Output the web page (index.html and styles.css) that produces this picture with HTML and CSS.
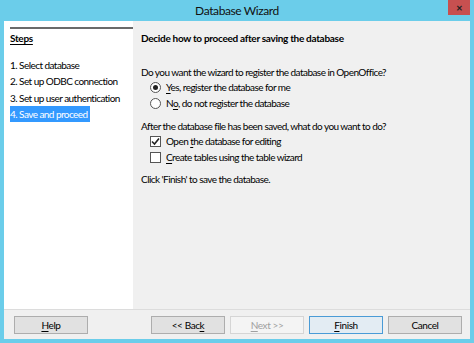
FILE: index.html
```html
<!DOCTYPE html>
<html>
<head lang="en">
    <meta charset="UTF-8">
    <title>Database Wizard</title>
    <link rel="stylesheet" href="styles.css">
</head>
<body>
<div class="window">
    <div class="titlebar">
        <span class="title">Database Wizard</span>
        <span class="close">&#x2715;</span>
    </div>
    <div class="client">
        <div class="main">
            <div class="steps">
                <div class="steps-head"><u>Steps</u></div>
                <ul class="step-list">
                    <li>1. Select database</li>
                    <li>2. Set up ODBC connection</li>
                    <li>3. Set up user authentication</li>
                    <li><span class="current">4. Save and proceed</span></li>
                </ul>
            </div>
            <div class="page">
                <div class="page-head">Decide how to proceed after saving the database</div>
                <p class="question">Do you want the wizard to register the database in OpenOffice?</p>
                <div class="option"><span class="radio checked"></span><span><u>Y</u>es, register the database for me</span></div>
                <div class="option"><span class="radio"></span><span>N<u>o</u>, do not register the database</span></div>
                <p class="question q2">After the database file has been saved, what do you want to do?</p>
                <div class="option"><span class="check checked"><svg width="9" height="9" viewBox="0 0 9 9"><path d="M1 4.5 L3.5 7 L8 1.5" fill="none" stroke="#222" stroke-width="1.6"/></svg></span><span>Open <u>t</u>he database for editing</span></div>
                <div class="option"><span class="check"></span><span><u>C</u>reate tables using the table wizard</span></div>
                <p class="question q3">Click 'Finish' to save the database.</p>
            </div>
        </div>
        <div class="footer">
            <button class="btn"><u>H</u>elp</button>
            <div class="spacer"></div>
            <button class="btn">&lt;&lt; Bac<u>k</u></button>
            <button class="btn disabled"><u>N</u>ext &gt;&gt;</button>
            <button class="btn default"><u>F</u>inish</button>
            <button class="btn">Cancel</button>
        </div>
    </div>
</div>
</body>
</html>
```

FILE: styles.css
```css
* { margin: 0; padding: 0; box-sizing: border-box;}
ul { list-style: none;}
u { text-decoration-thickness: 1px; text-underline-offset: 2px;}
body {
    width: 474px;
    height: 343px;
    overflow: hidden;
    font-family: "Lato", "Noto Sans", sans-serif;
    font-size: 10px;
    letter-spacing: -0.55px;
    color: #000;
    white-space: nowrap;
}
.window {
    width: 474px;
    height: 343px;
    background-color: #6bcdea;
    padding: 0 4px 4px 4px;
    display: flex;
    flex-direction: column;
}
.titlebar {
    height: 21px;
    display: flex;
    align-items: center;
    justify-content: center;
    position: relative;
}
.title {
    font-size: 12px;
    letter-spacing: -0.4px;
    color: #111;
}
.close {
    position: absolute;
    right: 0;
    top: 0;
    width: 22px;
    height: 15px;
    background-color: #c75050;
    color: #222;
    font-size: 8px;
    font-weight: bold;
    letter-spacing: 0;
    display: flex;
    align-items: center;
    justify-content: center;
}
.client {
    flex: 1;
    background-color: #f0f0f0;
    display: flex;
    flex-direction: column;
}
.main {
    height: 288px;
    display: flex;
}
.steps {
    width: 129px;
    background-color: #fff;
    padding: 6px 0 0 6px;
}
.steps-head {
    border-top: 2px solid #6a6a6a;
    font-weight: bold;
    letter-spacing: -0.3px;
    padding-top: 1px;
    height: 30px;
    line-height: 16px;
}
.step-list li {
    height: 16.4px;
    line-height: 16px;
}
.current {
    display: inline-block;
    background-color: #3399ff;
    color: #fff;
    padding-right: 2px;
}
.page {
    flex: 1;
    padding: 9px 0 0 8px;
}
.page-head {
    font-weight: bold;
    letter-spacing: -0.3px;
    line-height: 16px;
    height: 34px;
}
.question {
    line-height: 16px;
}
.q2 { margin-top: 7px;}
.q3 { margin-top: 6px;}
.option {
    display: flex;
    align-items: center;
    height: 16px;
    padding-left: 9px;
}
.question + .option { margin-top: -1px;}
.radio {
    width: 11px;
    height: 11px;
    border: 1px solid #555;
    border-radius: 50%;
    background-color: #fff;
    margin-right: 5px;
    display: flex;
    align-items: center;
    justify-content: center;
}
.radio.checked::after {
    content: "";
    width: 5px;
    height: 5px;
    border-radius: 50%;
    background-color: #222;
}
.check {
    width: 11px;
    height: 11px;
    border: 1px solid #555;
    background-color: #fff;
    margin-right: 5px;
    display: flex;
    align-items: center;
    justify-content: center;
}
.footer {
    flex: 1;
    border-top: 1px solid #dcdcdc;
    display: flex;
    align-items: flex-start;
    padding: 6px 8px 0 10px;
    gap: 5px;
}
.spacer { flex: 1;}
.btn {
    width: 74px;
    height: 18px;
    font-family: "Lato", "Noto Sans", sans-serif;
    font-size: 10px;
    letter-spacing: -0.4px;
    color: #000;
    background-color: #e1e1e1;
    border: 1px solid #adadad;
    line-height: 15px;
}
.btn.disabled {
    color: #a0a0a0;
    background-color: #f4f4f4;
    border-color: #d5d5d5;
}
.btn.default {
    border-color: #4a9bd6;
    background-color: #e3ecf3;
}
```
